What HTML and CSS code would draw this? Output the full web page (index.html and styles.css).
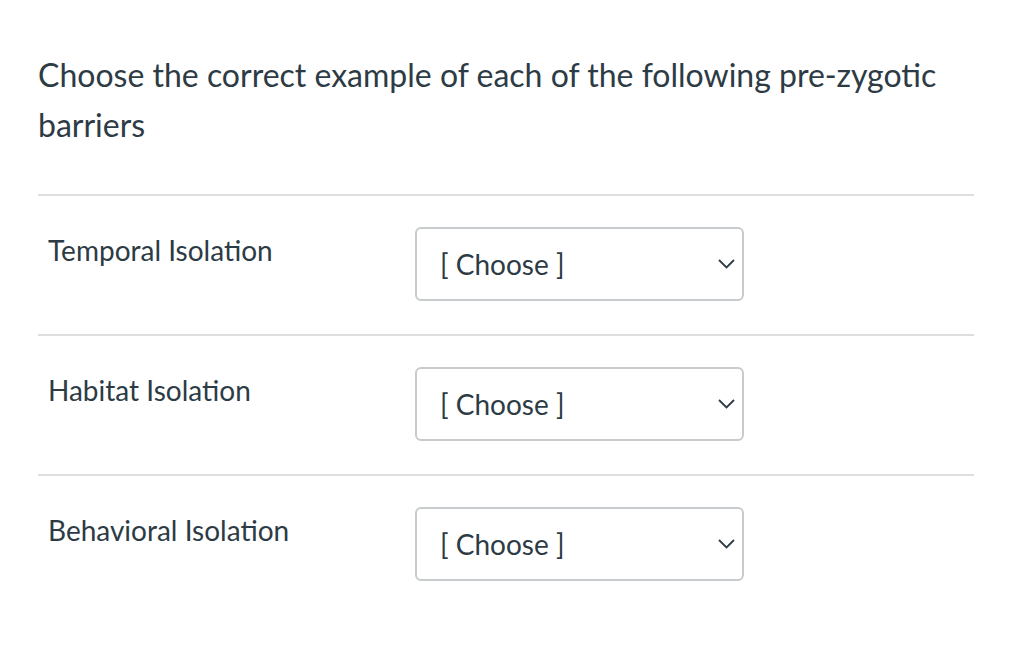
FILE: index.html
```html
<!DOCTYPE html>
<html lang="en">
<head>
    <meta charset="UTF-8">
    <meta name="viewport" content="width=device-width, initial-scale=1.0">
    <title>Question</title>
    <link rel="stylesheet" href="styles.css">
</head>
<body>
    <div class="question">
        <div class="question-text">
            Choose the correct example of each of the following pre-zygotic barriers
        </div>

        <div class="answers">
            <div class="answer-row">
                <div class="answer-label">Temporal Isolation</div>
                <div class="select">
                    <span>[ Choose ]</span>
                    <svg class="chevron" width="17" height="10" viewBox="0 0 17 10"><path d="M1 1 L8.5 8.5 L16 1" fill="none" stroke="#2d3b45" stroke-width="1.8"/></svg>
                </div>
            </div>
            <div class="answer-row">
                <div class="answer-label">Habitat Isolation</div>
                <div class="select">
                    <span>[ Choose ]</span>
                    <svg class="chevron" width="17" height="10" viewBox="0 0 17 10"><path d="M1 1 L8.5 8.5 L16 1" fill="none" stroke="#2d3b45" stroke-width="1.8"/></svg>
                </div>
            </div>
            <div class="answer-row">
                <div class="answer-label">Behavioral Isolation</div>
                <div class="select">
                    <span>[ Choose ]</span>
                    <svg class="chevron" width="17" height="10" viewBox="0 0 17 10"><path d="M1 1 L8.5 8.5 L16 1" fill="none" stroke="#2d3b45" stroke-width="1.8"/></svg>
                </div>
            </div>
        </div>
    </div>
</body>
</html>
```

FILE: styles.css
```css
body {
    font-family: 'Lato', 'Liberation Sans', sans-serif;
    margin: 0;
    padding: 0;
    background: #fff;
    color: #2d3b45;
}

.question {
    padding: 50px 40px 0 38px;
}

.question-text {
    font-size: 32px;
    line-height: 50px;
    margin-bottom: 44px;
}

.answer-row {
    display: flex;
    align-items: flex-start;
    border-top: 2px solid #dedede;
    padding: 31px 0 33px 10px;
}

.answer-label {
    width: 367px;
    font-size: 28px;
    line-height: 1.2;
    padding-top: 7px;
}

.select {
    box-sizing: border-box;
    width: 329px;
    height: 74px;
    border: 2px solid #c8cbcd;
    border-radius: 6px;
    display: flex;
    align-items: center;
    justify-content: space-between;
    padding: 0 7px 0 23px;
    font-size: 28px;
}

.chevron {
    display: block;
}
```
